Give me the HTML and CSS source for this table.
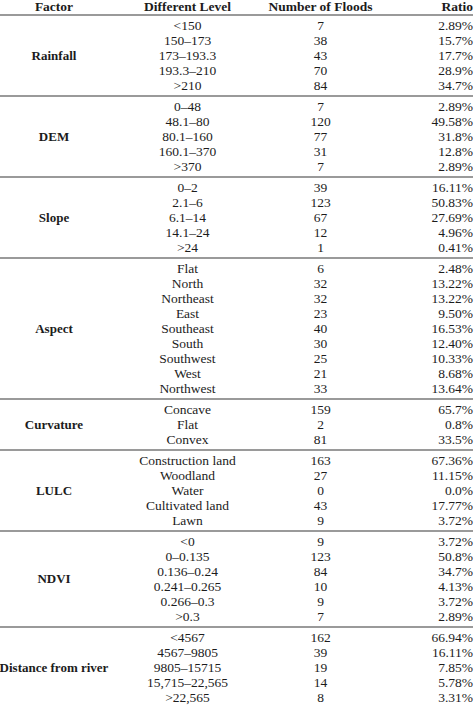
FILE: index.html
```html
<!DOCTYPE html>
<html>
<head>
<meta charset="utf-8">
<link rel="stylesheet" href="styles.css">
</head>
<body>
<div class="table">
  <div class="head">
    <div class="h-factor">Factor</div>
    <div class="h-level">Different Level</div>
    <div class="h-num">Number of Floods</div>
    <div class="h-ratio">Ratio</div>
  </div>

  <div class="group">
    <div class="factor">Rainfall</div>
    <div class="rows">
      <div class="row"><span class="lv">&lt;150</span><span class="nm">7</span><span class="rt">2.89%</span></div>
      <div class="row"><span class="lv">150–173</span><span class="nm">38</span><span class="rt">15.7%</span></div>
      <div class="row"><span class="lv">173–193.3</span><span class="nm">43</span><span class="rt">17.7%</span></div>
      <div class="row"><span class="lv">193.3–210</span><span class="nm">70</span><span class="rt">28.9%</span></div>
      <div class="row"><span class="lv">&gt;210</span><span class="nm">84</span><span class="rt">34.7%</span></div>
    </div>
  </div>

  <div class="group">
    <div class="factor">DEM</div>
    <div class="rows">
      <div class="row"><span class="lv">0–48</span><span class="nm">7</span><span class="rt">2.89%</span></div>
      <div class="row"><span class="lv">48.1–80</span><span class="nm">120</span><span class="rt">49.58%</span></div>
      <div class="row"><span class="lv">80.1–160</span><span class="nm">77</span><span class="rt">31.8%</span></div>
      <div class="row"><span class="lv">160.1–370</span><span class="nm">31</span><span class="rt">12.8%</span></div>
      <div class="row"><span class="lv">&gt;370</span><span class="nm">7</span><span class="rt">2.89%</span></div>
    </div>
  </div>

  <div class="group">
    <div class="factor">Slope</div>
    <div class="rows">
      <div class="row"><span class="lv">0–2</span><span class="nm">39</span><span class="rt">16.11%</span></div>
      <div class="row"><span class="lv">2.1–6</span><span class="nm">123</span><span class="rt">50.83%</span></div>
      <div class="row"><span class="lv">6.1–14</span><span class="nm">67</span><span class="rt">27.69%</span></div>
      <div class="row"><span class="lv">14.1–24</span><span class="nm">12</span><span class="rt">4.96%</span></div>
      <div class="row"><span class="lv">&gt;24</span><span class="nm">1</span><span class="rt">0.41%</span></div>
    </div>
  </div>

  <div class="group">
    <div class="factor">Aspect</div>
    <div class="rows">
      <div class="row"><span class="lv">Flat</span><span class="nm">6</span><span class="rt">2.48%</span></div>
      <div class="row"><span class="lv">North</span><span class="nm">32</span><span class="rt">13.22%</span></div>
      <div class="row"><span class="lv">Northeast</span><span class="nm">32</span><span class="rt">13.22%</span></div>
      <div class="row"><span class="lv">East</span><span class="nm">23</span><span class="rt">9.50%</span></div>
      <div class="row"><span class="lv">Southeast</span><span class="nm">40</span><span class="rt">16.53%</span></div>
      <div class="row"><span class="lv">South</span><span class="nm">30</span><span class="rt">12.40%</span></div>
      <div class="row"><span class="lv">Southwest</span><span class="nm">25</span><span class="rt">10.33%</span></div>
      <div class="row"><span class="lv">West</span><span class="nm">21</span><span class="rt">8.68%</span></div>
      <div class="row"><span class="lv">Northwest</span><span class="nm">33</span><span class="rt">13.64%</span></div>
    </div>
  </div>

  <div class="group">
    <div class="factor">Curvature</div>
    <div class="rows">
      <div class="row"><span class="lv">Concave</span><span class="nm">159</span><span class="rt">65.7%</span></div>
      <div class="row"><span class="lv">Flat</span><span class="nm">2</span><span class="rt">0.8%</span></div>
      <div class="row"><span class="lv">Convex</span><span class="nm">81</span><span class="rt">33.5%</span></div>
    </div>
  </div>

  <div class="group">
    <div class="factor">LULC</div>
    <div class="rows">
      <div class="row"><span class="lv">Construction land</span><span class="nm">163</span><span class="rt">67.36%</span></div>
      <div class="row"><span class="lv">Woodland</span><span class="nm">27</span><span class="rt">11.15%</span></div>
      <div class="row"><span class="lv">Water</span><span class="nm">0</span><span class="rt">0.0%</span></div>
      <div class="row"><span class="lv">Cultivated land</span><span class="nm">43</span><span class="rt">17.77%</span></div>
      <div class="row"><span class="lv">Lawn</span><span class="nm">9</span><span class="rt">3.72%</span></div>
    </div>
  </div>

  <div class="group">
    <div class="factor">NDVI</div>
    <div class="rows">
      <div class="row"><span class="lv">&lt;0</span><span class="nm">9</span><span class="rt">3.72%</span></div>
      <div class="row"><span class="lv">0–0.135</span><span class="nm">123</span><span class="rt">50.8%</span></div>
      <div class="row"><span class="lv">0.136–0.24</span><span class="nm">84</span><span class="rt">34.7%</span></div>
      <div class="row"><span class="lv">0.241–0.265</span><span class="nm">10</span><span class="rt">4.13%</span></div>
      <div class="row"><span class="lv">0.266–0.3</span><span class="nm">9</span><span class="rt">3.72%</span></div>
      <div class="row"><span class="lv">&gt;0.3</span><span class="nm">7</span><span class="rt">2.89%</span></div>
    </div>
  </div>

  <div class="group">
    <div class="factor">Distance from river</div>
    <div class="rows">
      <div class="row"><span class="lv">&lt;4567</span><span class="nm">162</span><span class="rt">66.94%</span></div>
      <div class="row"><span class="lv">4567–9805</span><span class="nm">39</span><span class="rt">16.11%</span></div>
      <div class="row"><span class="lv">9805–15715</span><span class="nm">19</span><span class="rt">7.85%</span></div>
      <div class="row"><span class="lv">15,715–22,565</span><span class="nm">14</span><span class="rt">5.78%</span></div>
      <div class="row"><span class="lv">&gt;22,565</span><span class="nm">8</span><span class="rt">3.31%</span></div>
    </div>
  </div>
</div>
</body>
</html>
```

FILE: styles.css
```css
html, body {
  margin: 0;
  padding: 0;
  background: #ffffff;
}

body {
  font-family: "Liberation Serif", "DejaVu Serif", serif;
  font-size: 13.5px;
  color: #1c1c1c;
  width: 474px;
  height: 707px;
  overflow: hidden;
}

.table {
  margin-top: -3px;
  padding-right: 1px;
}

.head {
  display: grid;
  grid-template-columns: 108px 159px 107px 1fr;
  height: 19px;
  line-height: 19px;
  font-weight: bold;
  border-bottom: 2px solid #9a9a9a;
  box-sizing: border-box;
}

.h-factor, .h-level, .h-num { text-align: center; }
.h-ratio { text-align: right; }

.group {
  display: flex;
  border-top: 2px solid #9a9a9a;
  padding: 2px 0 2px;
}

.head + .group {
  border-top: 0;
}

.factor {
  width: 108px;
  flex: none;
  display: flex;
  align-items: center;
  justify-content: center;
  font-size: 13px;
  font-weight: bold;
  white-space: nowrap;
}

.rows {
  flex: 1;
}

.row {
  display: grid;
  grid-template-columns: 159px 107px 1fr;
  height: 15px;
  line-height: 15px;
}

.lv, .nm { text-align: center; }
.rt { text-align: right; }
```
